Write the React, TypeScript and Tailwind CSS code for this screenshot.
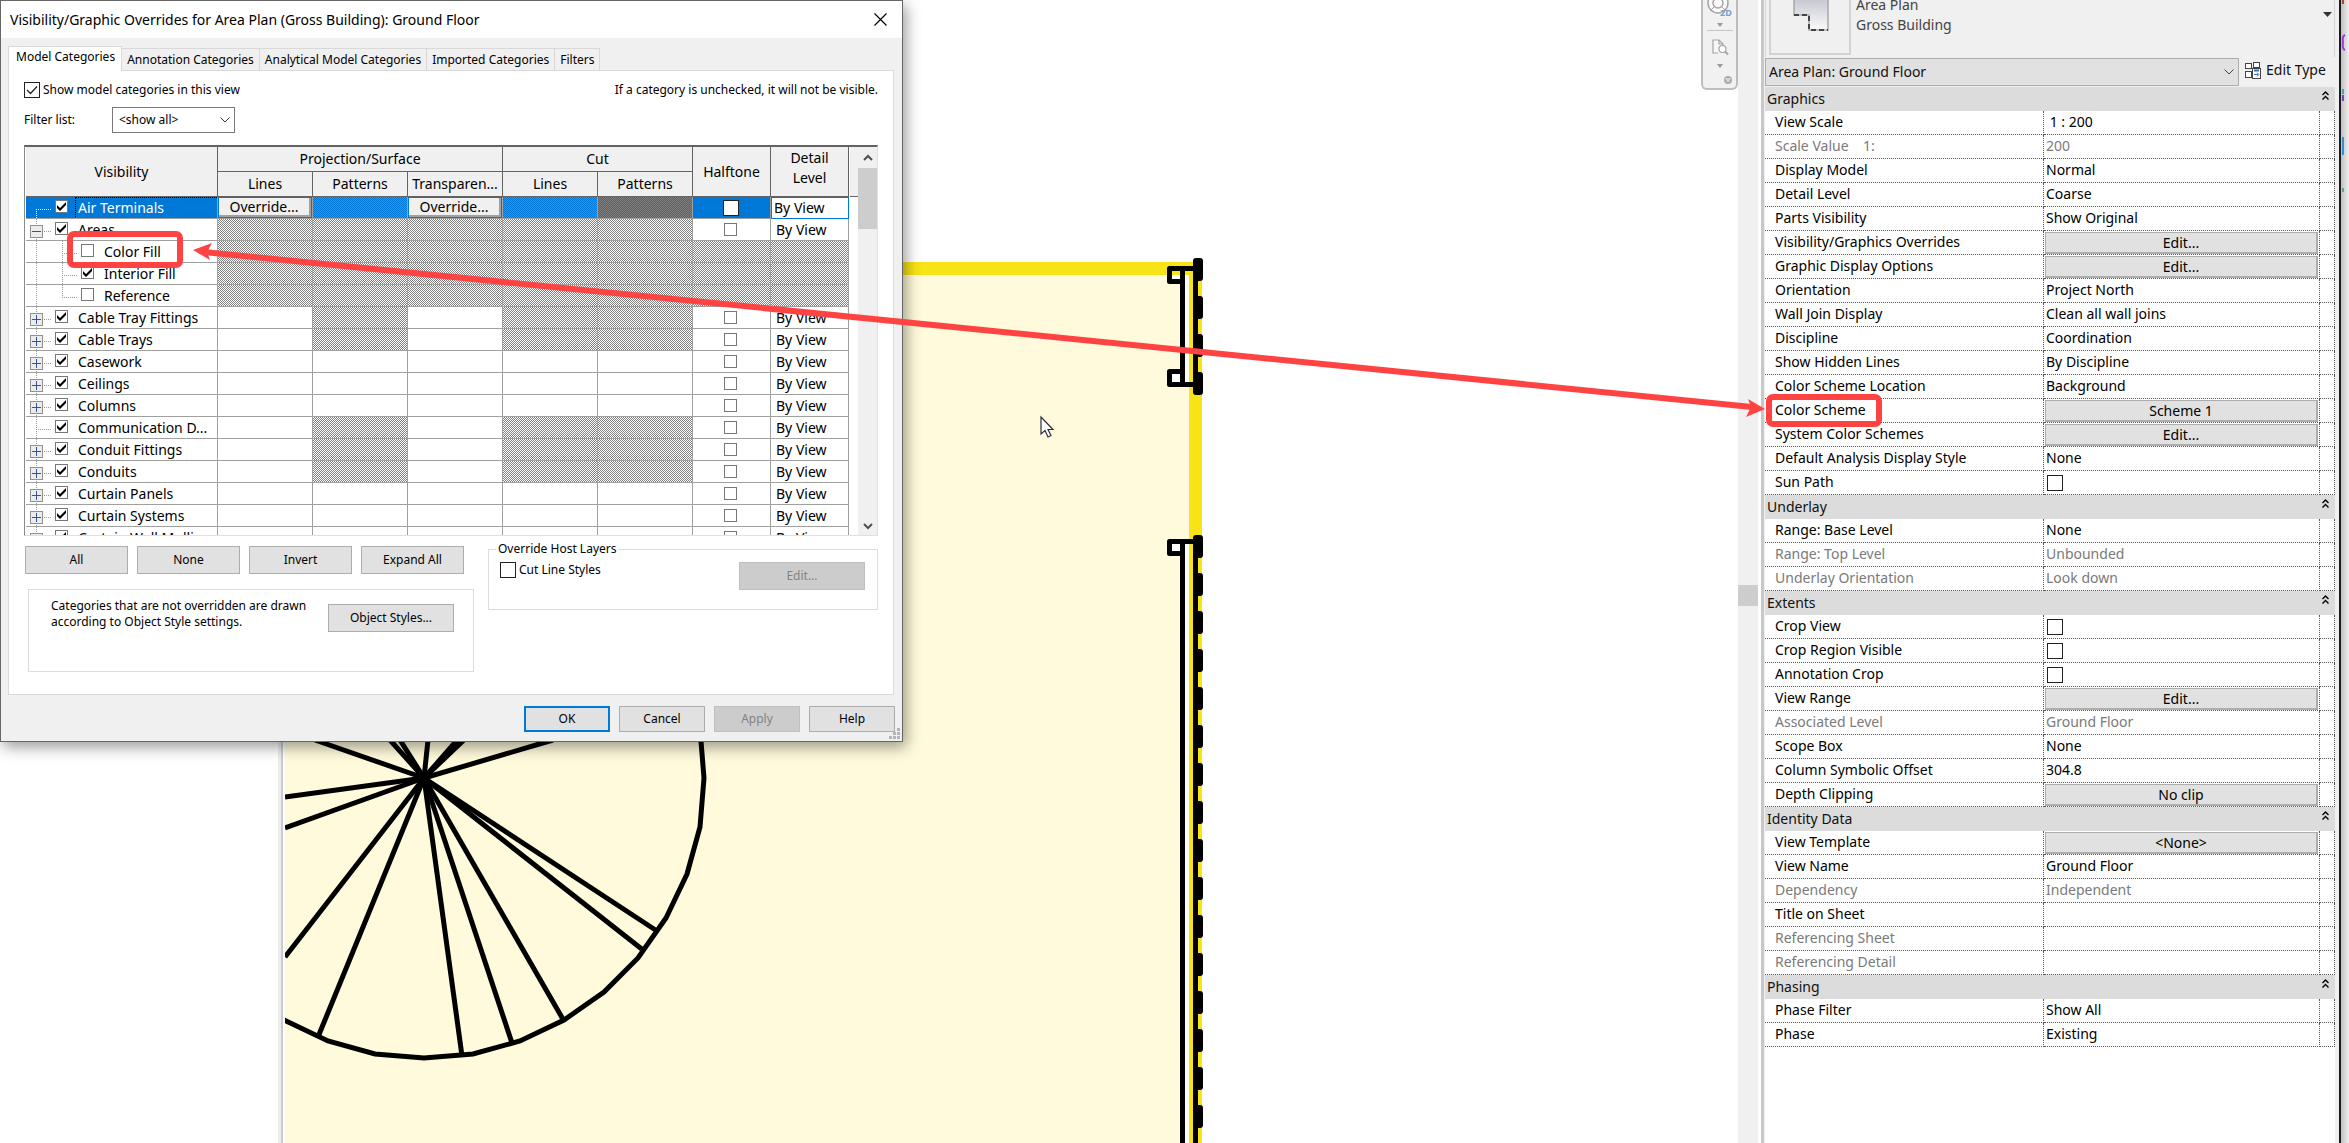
import { Fragment, type ReactNode } from "react";

const CENTER = { x: 424, y: 778 };
const RADIUS = 280;
const ARC = Array.from({ length: 36 }, (_, i) => {
  const a = (i * Math.PI) / 18;
  return `${Math.round(CENTER.x + RADIUS * Math.cos(a))},${Math.round(CENTER.y + RADIUS * Math.sin(a))}`;
}).join(" ");
const SPOKES: [number, number][] = [
  [285, 797], [285, 828], [285, 957], [318, 1037], [462, 1056], [512, 1043], [564, 1021],
  [643, 950], [657, 931], [315, 740], [390, 740], [400, 740], [428, 740], [459, 738], [466, 738], [553, 740],
];
const BOLTS = [258, 296, 334, 372, 535, 573, 611, 649, 687, 725, 763, 801, 839, 877, 915, 953, 991, 1029, 1067, 1105, 1143, 1181];

function PlanDrawing() {
  return (
    <svg className="absolute inset-0 h-full w-full" aria-hidden="true" shapeRendering="crispEdges">
      <rect x="285" y="262" width="917" height="3000" fill="#fffadb" />
      <rect x="285" y="262" width="917" height="13" fill="#f8e316" />
      <rect x="1189" y="262" width="13" height="3000" fill="#f8e316" />
      <rect x="278" y="0" width="3" height="3000" fill="#ededed" />
      <rect x="281" y="0" width="2" height="3000" fill="#cbcbcb" />
      <rect x="283" y="0" width="2" height="3000" fill="#ffffff" />

      <rect x="1185" y="275" width="4" height="108" fill="#fff" />
      <rect x="1172" y="275" width="8" height="5" fill="#fff" />
      <rect x="1172" y="374" width="8" height="9" fill="#fff" />
      <rect x="1185" y="544" width="4" height="3000" fill="#fff" />
      <rect x="1172" y="544" width="8" height="8" fill="#fff" />
      <g fill="none" stroke="#000" strokeWidth="5" shapeRendering="auto" strokeLinejoin="round">
        <path d="M1195.500 268.500H1169.500V281.500H1182.500M1182.500 268.500V384.500M1195.500 384.500H1169.500V371.500H1182.500" />
        <path d="M1195.500 541.500H1169.500V553.500H1182.500M1182.500 541.500V3000" />
        <path d="M1195.500 262V390M1195.500 540V3000" />
      </g>
      <g fill="#000" shapeRendering="auto">
        {BOLTS.map((y) => (
          <rect key={y} x="1193" y={y} width="10" height="23" rx="3" />
        ))}
      </g>

      <g stroke="#000" strokeWidth="5" fill="none" shapeRendering="auto">
        <svg x="285" y="262" width="900" height="3000" viewBox="285 262 900 3000">
          <polygon points={ARC} />
          {SPOKES.map(([x, y]) => (
            <line key={`${x}-${y}`} x1={CENTER.x} y1={CENTER.y} x2={x} y2={y} />
          ))}
        </svg>
      </g>

      <path
        d="M1041 417V434L1045 430.500L1048 437L1051 435.500L1048 429.500H1053Z"
        fill="#fff"
        stroke="#2b2f45"
        strokeWidth="1.200"
        shapeRendering="auto"
      />
    </svg>
  );
}

function NavigationBar() {
  return (
    <nav className="absolute top-0 right-0 flex h-[90px] w-[37px] flex-col items-center rounded-b-md border-2 border-t-0 border-[#bdbdbd] bg-[#f1f1f1]">
      <button aria-label="Steering wheel 2D" className="h-5">
        <svg width="28" height="20" viewBox="0 0 28 20" fill="none" stroke="#a5a5a5">
          <circle cx="12" cy="3" r="10" strokeWidth="1.500" fill="#fafafa" />
          <circle cx="12" cy="3" r="5" strokeWidth="1.500" />
          <path d="M4 11L8 7M20 11L16 7" />
          <text x="14" y="16" fontSize="9" fontWeight="700" fontFamily="Noto Sans, sans-serif" fill="#7b9fca" stroke="none">2D</text>
        </svg>
      </button>
      <svg width="6" height="4" viewBox="0 0 6 4" className="mt-[3px]"><path d="M0 0H6L3 4Z" fill="#999" /></svg>
      <hr className="mt-[3px] w-[26px] border-[#c4c4c4]" />
      <button aria-label="Zoom in region" className="mt-2">
        <svg width="18" height="17" viewBox="0 0 18 17" fill="none" stroke="#a3a3a3" strokeWidth="1.200">
          <path d="M7 14H2V1H8L12 5V6" fill="#f7f7f7" />
          <path d="M8 1V5H12" />
          <circle cx="11.500" cy="10" r="3.500" fill="#fff" />
          <path d="M14 12.500L17 15.500" strokeWidth="2" />
        </svg>
      </button>
      <svg width="6" height="4" viewBox="0 0 6 4" className="mt-2"><path d="M0 0H6L3 4Z" fill="#999" /></svg>
      <button aria-label="Customize" className="mt-2 mr-1 self-end">
        <svg width="8" height="8" viewBox="0 0 8 8">
          <circle cx="4" cy="4" r="4" fill="#a9a9a9" />
          <path d="M1.500 3H6.500M2.500 5H5.500" stroke="#fff" />
        </svg>
      </button>
    </nav>
  );
}

function Check({ label, checked = false, box = "size-4 border-[#222]", thin = false }: { label: string; checked?: boolean; box?: string; thin?: boolean }) {
  return (
    <span className="inline-grid shrink-0 place-items-center align-top">
      <input
        type="checkbox"
        aria-label={label}
        defaultChecked={checked}
        className={`peer col-start-1 row-start-1 appearance-none border bg-white ${box}`}
      />
      {thin ? (
        <svg width="12" height="12" viewBox="0 0 12 12" className="pointer-events-none invisible col-start-1 row-start-1 peer-checked:visible">
          <path d="M1 6L4.500 9.500L11 2.500" fill="none" stroke="#222" strokeWidth="1.300" />
        </svg>
      ) : (
        <svg width="11" height="11" viewBox="0 0 11 11" className="pointer-events-none invisible col-start-1 row-start-1 peer-checked:visible">
          <path d="M1 4L4 7L10 1V4L4 10L1 7Z" fill="#000" />
        </svg>
      )}
    </span>
  );
}

type Category = {
  name: string;
  checked?: boolean;
  kind: "leaf" | "open" | "closed" | "child" | "last";
  grey: "all" | "none" | "cols" | "surface";
  selected?: boolean;
};

const CATEGORIES: Category[] = [
  { name: "Air Terminals", checked: true, kind: "leaf", grey: "cols", selected: true },
  { name: "Areas", checked: true, kind: "open", grey: "surface" },
  { name: "Color Fill", kind: "child", grey: "all" },
  { name: "Interior Fill", checked: true, kind: "child", grey: "all" },
  { name: "Reference", kind: "last", grey: "all" },
  { name: "Cable Tray Fittings", checked: true, kind: "closed", grey: "cols" },
  { name: "Cable Trays", checked: true, kind: "closed", grey: "cols" },
  { name: "Casework", checked: true, kind: "closed", grey: "none" },
  { name: "Ceilings", checked: true, kind: "closed", grey: "none" },
  { name: "Columns", checked: true, kind: "closed", grey: "none" },
  { name: "Communication D...", checked: true, kind: "leaf", grey: "cols" },
  { name: "Conduit Fittings", checked: true, kind: "closed", grey: "cols" },
  { name: "Conduits", checked: true, kind: "closed", grey: "cols" },
  { name: "Curtain Panels", checked: true, kind: "closed", grey: "none" },
  { name: "Curtain Systems", checked: true, kind: "closed", grey: "none" },
  { name: "Curtain Wall Mulli...", checked: true, kind: "closed", grey: "none" },
];

function TreeLines({ cat }: { cat: Category }) {
  const child = cat.kind === "child" || cat.kind === "last";
  const expandable = cat.kind === "open" || cat.kind === "closed";
  const stroke = cat.selected ? "#fff" : "#999";
  return (
    <svg width={child ? 54 : 28} height="22" viewBox={child ? "0 0 54 22" : "0 0 28 22"} className="shrink-0" shapeRendering="crispEdges">
      <g stroke={stroke} strokeDasharray="1 1" fill="none">
        <path d={cat.selected ? "M10.500 12V22" : "M10.500 0V22"} />
        {child ? <path d={cat.kind === "last" ? "M36.500 0V12M36 12.500H51" : "M36.500 0V22M36 12.500H51"} /> : <path d="M10 12.500H26" />}
      </g>
      {expandable && (
        <g>
          <rect x="4.500" y="6.500" width="12" height="12" fill="#ececec" stroke="#919191" />
          <path d={cat.kind === "open" ? "M6 12.500H15" : "M6 12.500H15M10.500 8V17"} stroke="#31559b" />
        </g>
      )}
    </svg>
  );
}

const GREY = "bg-[repeating-conic-gradient(#808080_0_25%,#ffffff_0_50%)] bg-[length:2px_2px]";
const GREY_BLUE = "bg-[repeating-conic-gradient(#808080_0_25%,#0078d7_0_50%)] bg-[length:2px_2px]";
const CELL = "h-[22px] overflow-hidden border-r border-b border-[#a0a0a0] p-0";
const HEAD = "border-r border-b border-[#636363] bg-[#f0f0f0] p-0 font-normal";

function CategoryRow({ cat }: { cat: Category }) {
  const sel = cat.selected;
  const base = sel ? "bg-[#0078d7]" : "bg-white";
  const shaded = sel ? GREY_BLUE : GREY;
  const wide = cat.grey === "all";
  const child = cat.kind === "child" || cat.kind === "last";
  const isGrey = (i: number) => wide || cat.grey === "surface" || (cat.grey === "cols" && (i === 1 || i > 2));
  return (
    <tr>
      <th scope="row" className={`${CELL} ${base} text-left font-normal ${sel ? "text-white" : "text-black"}`}>
        <div className="flex h-[21px] items-start">
          <TreeLines cat={cat} />
          <span className="mt-[3px] ml-px">
            <Check label={cat.name} checked={cat.checked} box="size-[13px] border-[#777]" />
          </span>
          <span className={`h-[22px] ${child ? "pl-[10px] leading-[22px]" : sel ? "ml-[7px] grow border-t border-l border-dotted border-black pl-[2px] leading-5" : "pl-[10px] leading-[22px]"}`}>
            {cat.name}
          </span>
        </div>
      </th>
      {[0, 1, 2, 3, 4].map((i) => (
        <td key={i} className={`${CELL} ${isGrey(i) ? shaded : base}`}>
          {sel && !isGrey(i) && (
            <button className="mx-auto block h-[19px] w-[92px] border-r-2 border-b-2 border-[#a0a0a0] bg-[#f0f0f0] leading-[17px]">Override...</button>
          )}
        </td>
      ))}
      <td className={`${CELL} ${wide ? GREY : base}`}>
        {!wide && (
          <span className="flex justify-center pr-[2px]">
            <Check label={`${cat.name} halftone`} box={sel ? "size-4 border-[#222]" : "size-[13px] border-[#777]"} />
          </span>
        )}
      </td>
      <td className={`${CELL} ${wide ? GREY : "bg-white"} ${sel ? "outline-1 -outline-offset-1 outline-[#0078d7]" : ""}`}>
        {!wide && <span className={`block leading-5 ${sel ? "pl-[3px]" : "pl-[5px]"}`}>By View</span>}
      </td>
    </tr>
  );
}

function CategoryTable() {
  return (
    <div className="mt-3 flex h-[391px] overflow-hidden border border-t-2 border-[#e0e0e0] border-t-[#636363] border-l-[#8a8a8a] text-sm">
      <div className="grow pl-px">
        <table className="w-[823px] table-fixed border-separate border-spacing-0">
          <colgroup>
            <col className="w-[192px]" />
            <col className="w-[95px]" />
            <col className="w-[95px]" />
            <col className="w-[95px]" />
            <col className="w-[95px]" />
            <col className="w-[95px]" />
            <col className="w-[78px]" />
            <col className="w-[78px]" />
          </colgroup>
          <thead>
            <tr className="h-[25px]">
              <th rowSpan={2} className={HEAD}>Visibility</th>
              <th colSpan={3} className={HEAD}>Projection/Surface</th>
              <th colSpan={2} className={HEAD}>Cut</th>
              <th rowSpan={2} className={HEAD}>Halftone</th>
              <th rowSpan={2} className={`${HEAD} pb-2 leading-5`}>Detail<br />Level</th>
            </tr>
            <tr className="h-[25px]">
              {["Lines", "Patterns", "Transparen...", "Lines", "Patterns"].map((h, i) => (
                <th key={i} className={HEAD}>{h}</th>
              ))}
            </tr>
          </thead>
          <tbody>
            {CATEGORIES.map((c) => (
              <CategoryRow key={c.name} cat={c} />
            ))}
          </tbody>
        </table>
      </div>
      <div className="w-2 shrink-0">
        <div className="h-[50px] border-b border-[#636363] bg-[#f0f0f0]" />
      </div>
      <div className="flex w-[19px] shrink-0 flex-col items-center bg-[#f0f0f0]">
        <button aria-label="Scroll up" className="flex h-[21px] w-full items-center justify-center">
          <svg width="10" height="7" viewBox="0 0 10 7"><path d="M1 6L5 2L9 6" fill="none" stroke="#505050" strokeWidth="2" /></svg>
        </button>
        <div className="h-[61px] w-full bg-[#cdcdcd]" />
        <button aria-label="Scroll down" className="mt-auto flex h-[18px] w-full items-center justify-center">
          <svg width="10" height="7" viewBox="0 0 10 7"><path d="M1 1L5 5L9 1" fill="none" stroke="#505050" strokeWidth="2" /></svg>
        </button>
      </div>
    </div>
  );
}

const BTN = "border border-[#adadad] bg-[#e1e1e1]";
const BTN_OFF = "border border-[#bfbfbf] bg-[#cccccc] text-[#838383]";
const TAB = "h-[22px] border border-b-0 border-l-0 border-[#d9d9d9] px-[5px]";

function OverridesDialog() {
  return (
    <section
      role="dialog"
      aria-label="Visibility/Graphic Overrides"
      className="absolute top-0 left-0 w-[903px] border border-[#666] bg-[#f0f0f0] text-xs leading-4 text-black shadow-[3px_5px_14px_rgba(0,0,0,0.4)]"
    >
      <header className="flex h-[37px] items-center justify-between bg-white pr-[15px] pl-[9px]">
        <h1 className="text-sm">Visibility/Graphic Overrides for Area Plan (Gross Building): Ground Floor</h1>
        <button aria-label="Close">
          <svg width="13" height="13" viewBox="0 0 13 13"><path d="M0.500 0.500L12.500 12.500M12.500 0.500L0.500 12.500" stroke="#000" strokeWidth="1.200" /></svg>
        </button>
      </header>
      <div role="tablist" className="flex h-[32px] items-end pl-[7px]">
        <button role="tab" aria-selected="true" className="relative top-px h-[25px] border border-b-0 border-[#d9d9d9] bg-white pr-[6px] pb-1 pl-[7px]">Model Categories</button>
        <button role="tab" className={TAB}>Annotation Categories</button>
        <button role="tab" className={TAB}>Analytical Model Categories</button>
        <button role="tab" className={TAB}>Imported Categories</button>
        <button role="tab" className={TAB}>Filters</button>
      </div>
      <div role="tabpanel" className="mr-2 ml-[7px] border border-[#d9d9d9] bg-white px-[15px] pt-[11px] pb-[22px]">
        <div className="flex items-center justify-between">
          <label className="flex items-center gap-[3px]">
            <Check label="Show model categories in this view" checked thin />
            Show model categories in this view
          </label>
          <p>If a category is unchecked, it will not be visible.</p>
        </div>
        <div className="mt-[9px] flex items-center">
          <label htmlFor="filter" className="w-[88px]">Filter list:</label>
          <span className="grid w-[123px] items-center">
            <select id="filter" className="col-start-1 row-start-1 h-[26px] appearance-none border border-[#7a7a7a] bg-white pl-[6px]">
              <option>&lt;show all&gt;</option>
            </select>
            <svg width="10" height="6" viewBox="0 0 10 6" className="pointer-events-none col-start-1 row-start-1 mr-[5px] justify-self-end"><path d="M0.500 0.500L5 5L9.500 0.500" fill="none" stroke="#333" /></svg>
          </span>
        </div>
        <CategoryTable />
        <div className="mt-[5px] flex gap-[14px]">
          <div className="w-[450px] pt-[5px]">
            <div className="flex gap-[9px] pl-px">
              {["All", "None", "Invert", "Expand All"].map((b) => (
                <button key={b} className={`h-7 w-[103px] ${BTN}`}>{b}</button>
              ))}
            </div>
            <div className="mt-[15px] ml-1 flex h-[83px] justify-between border border-[#dcdcdc] pt-[8px] pr-[19px] pl-[22px]">
              <p>Categories that are not overridden are drawn<br />according to Object Style settings.</p>
              <button className={`mt-[6px] h-7 w-[126px] ${BTN}`}>Object Styles...</button>
            </div>
          </div>
          <fieldset className="h-[69px] grow border border-[#dcdcdc] pr-3 pl-[11px]">
            <legend className="-ml-1 px-[2px]">Override Host Layers</legend>
            <div className="flex items-start justify-between pt-[5px]">
              <label className="flex items-center gap-[3px]">
                <Check label="Cut Line Styles" />
                Cut Line Styles
              </label>
              <button disabled className={`h-7 w-[126px] ${BTN_OFF}`}>Edit...</button>
            </div>
          </fieldset>
        </div>
      </div>
      <footer className="flex h-[46px] justify-end gap-[9px] pt-[11px] pr-[7px]">
        <button className="h-[26px] w-[86px] border-2 border-[#0078d7] bg-[#e1e1e1]">OK</button>
        <button className={`h-[26px] w-[86px] ${BTN}`}>Cancel</button>
        <button disabled className={`h-[26px] w-[86px] ${BTN_OFF}`}>Apply</button>
        <button className={`h-[26px] w-[86px] ${BTN}`}>Help</button>
      </footer>
      <svg width="11" height="11" viewBox="0 0 11 11" className="absolute right-[2px] bottom-[2px]" fill="#b5b5b5">
        <path d="M8 0h3v3h-3zM4 4h3v3h-3zM8 4h3v3h-3zM0 8h3v3h-3zM4 8h3v3h-3zM8 8h3v3h-3z" />
      </svg>
    </section>
  );
}

type Prop = { label: string; value?: string; kind?: "button" | "check"; off?: boolean };
const GROUPS: { title: string; rows: Prop[] }[] = [
  {
    title: "Graphics",
    rows: [
      { label: "View Scale", value: "\u00a01 : 200" },
      { label: "Scale Value\u00a0\u00a0\u00a0\u00a01:", value: "200", off: true },
      { label: "Display Model", value: "Normal" },
      { label: "Detail Level", value: "Coarse" },
      { label: "Parts Visibility", value: "Show Original" },
      { label: "Visibility/Graphics Overrides", value: "Edit...", kind: "button" },
      { label: "Graphic Display Options", value: "Edit...", kind: "button" },
      { label: "Orientation", value: "Project North" },
      { label: "Wall Join Display", value: "Clean all wall joins" },
      { label: "Discipline", value: "Coordination" },
      { label: "Show Hidden Lines", value: "By Discipline" },
      { label: "Color Scheme Location", value: "Background" },
      { label: "Color Scheme", value: "Scheme 1", kind: "button" },
      { label: "System Color Schemes", value: "Edit...", kind: "button" },
      { label: "Default Analysis Display Style", value: "None" },
      { label: "Sun Path", kind: "check" },
    ],
  },
  {
    title: "Underlay",
    rows: [
      { label: "Range: Base Level", value: "None" },
      { label: "Range: Top Level", value: "Unbounded", off: true },
      { label: "Underlay Orientation", value: "Look down", off: true },
    ],
  },
  {
    title: "Extents",
    rows: [
      { label: "Crop View", kind: "check" },
      { label: "Crop Region Visible", kind: "check" },
      { label: "Annotation Crop", kind: "check" },
      { label: "View Range", value: "Edit...", kind: "button" },
      { label: "Associated Level", value: "Ground Floor", off: true },
      { label: "Scope Box", value: "None" },
      { label: "Column Symbolic Offset", value: "304.8" },
      { label: "Depth Clipping", value: "No clip", kind: "button" },
    ],
  },
  {
    title: "Identity Data",
    rows: [
      { label: "View Template", value: "<None>", kind: "button" },
      { label: "View Name", value: "Ground Floor" },
      { label: "Dependency", value: "Independent", off: true },
      { label: "Title on Sheet" },
      { label: "Referencing Sheet", off: true },
      { label: "Referencing Detail", off: true },
    ],
  },
  {
    title: "Phasing",
    rows: [
      { label: "Phase Filter", value: "Show All" },
      { label: "Phase", value: "Existing" },
    ],
  },
];

const PCELL = "h-6 border-r border-b border-dotted border-[#555] p-0 text-left font-normal";

function PropertyValue({ p }: { p: Prop }): ReactNode {
  if (p.kind === "button")
    return <button aria-label={`${p.label}: ${p.value}`} className="ml-px block h-[22px] w-[273px] border border-r-2 border-b-2 border-[#adadad] bg-[#e1e1e1] leading-[19px]">{p.value}</button>;
  if (p.kind === "check")
    return <span className="ml-[3px] flex"><Check label={p.label} /></span>;
  return <span className="block pb-[2px] pl-[2px] leading-5">{p.value}</span>;
}

function PropertiesPanel() {
  return (
    <aside aria-label="Properties" className="flex w-[578px] shrink-0 flex-col border-l-[3px] border-[#c8c8c8] bg-[#f0f0f0] pr-1 pl-px text-sm text-[#111]">
      <div className="flex h-[57px] border-x border-[#d4d4d4] pl-[3px]">
        <div className="h-[55px] w-[82px] border-2 border-t-0 border-[#d2d2d2] pl-[22px]">
          <svg width="36" height="32" viewBox="0 0 36 32">
            <defs>
              <linearGradient id="plan" x1="0" y1="0" x2="0" y2="1">
                <stop offset="0" stopColor="#c7cad3" />
                <stop offset="1" stopColor="#fafafa" />
              </linearGradient>
            </defs>
            <path d="M1 0V15H16V30H35V0Z" fill="url(#plan)" />
            <path d="M1 0V15H16V30H35V0" fill="none" stroke="#a9a9a9" strokeWidth="1.500" />
            <path d="M1 15H16V30H35" fill="none" stroke="#444" strokeWidth="2" strokeDasharray="5 3" />
          </svg>
        </div>
        <div className="-mt-[5px] ml-[5px] grow leading-5 text-[#444]">
          <p>Area Plan</p>
          <p>Gross Building</p>
        </div>
        <button aria-label="Type selector" className="mr-[2px] h-7">
          <svg width="9" height="5" viewBox="0 0 9 5"><path d="M0 0H9L4.500 5Z" fill="#333" /></svg>
        </button>
      </div>
      <div className="flex h-[30px] items-center">
        <span className="grid w-[474px] items-center">
          <select aria-label="View selector" className="col-start-1 row-start-1 h-7 appearance-none border border-[#adadad] bg-[#e1e1e1] pl-[3px]">
            <option>Area Plan: Ground Floor</option>
          </select>
          <svg width="10" height="6" viewBox="0 0 10 6" className="pointer-events-none col-start-1 row-start-1 mr-[5px] justify-self-end"><path d="M0.500 0.500L5 5L9.500 0.500" fill="none" stroke="#444" /></svg>
        </span>
        <button className="ml-[6px] flex items-center gap-[5px] pb-1">
          <svg width="16" height="17" viewBox="0 0 16 17" fill="#fff" stroke="#444">
            <rect x="0.500" y="1.500" width="6" height="5" />
            <rect x="8.500" y="0.500" width="6" height="5" />
            <rect x="0.500" y="9.500" width="6" height="6" />
            <rect x="7.500" y="6.500" width="8" height="10" />
            <path d="M9 8.500H14" stroke="#2f6fb5" strokeWidth="2" />
            <path d="M9 12.500H13M12 10.500L14 12.500L12 14.500" stroke="#2f6fb5" fill="none" />
          </svg>
          Edit Type
        </button>
      </div>
      <div className="grow bg-white">
        <table className="w-full table-fixed border-separate border-spacing-0">
          <colgroup>
            <col className="w-[279px]" />
            <col />
            <col className="w-[15px]" />
          </colgroup>
          <tbody>
            {GROUPS.map((g) => (
              <Fragment key={g.title}>
                <tr className="bg-[#dcdcdc]">
                  <th colSpan={3} className="h-6 p-0 text-left font-normal">
                    <button className="flex h-6 w-full justify-between pr-[6px] pl-[2px] leading-6">
                      {g.title}
                      <svg width="7" height="9" viewBox="0 0 7 9" className="mt-1" fill="none" stroke="#000" strokeWidth="1.400">
                        <path d="M0.500 4L3.500 1L6.500 4M0.500 8.500L3.500 5.500L6.500 8.500" />
                      </svg>
                    </button>
                  </th>
                </tr>
                {g.rows.map((p) => (
                  <tr key={p.label} className={p.off ? "text-[#7a7a7a]" : "text-black"}>
                    <th scope="row" className={`${PCELL} pb-[2px] pl-[10px] leading-5`}>{p.label}</th>
                    <td className={PCELL}><PropertyValue p={p} /></td>
                    <td className={PCELL} />
                  </tr>
                ))}
              </Fragment>
            ))}
          </tbody>
        </table>
      </div>
    </aside>
  );
}

function Callouts() {
  return (
    <svg className="pointer-events-none absolute inset-0 h-full w-full" aria-hidden="true">
      <g fill="none" stroke="#ff4343" strokeWidth="6">
        <rect x="70" y="234" width="110" height="31" rx="4" />
        <rect x="1769" y="397" width="110" height="27" rx="4" />
        <line x1="204" y1="252" x2="1752" y2="407" />
      </g>
      <g fill="#ff4343">
        <path d="M193 250L212 243L207 252L210 260Z" />
        <path d="M1765 409L1748 399L1751 407L1746 417Z" />
      </g>
    </svg>
  );
}

export default function App() {
  return (
    <div className="relative flex h-screen overflow-hidden bg-white font-['Noto_Sans',sans-serif]">
      <main className="relative grow">
        <PlanDrawing />
        <NavigationBar />
        <OverridesDialog />
      </main>
      <div className="mr-[3px] flex w-5 shrink-0 flex-col bg-[#f0f0f0] pt-[585px]">
        <div className="h-[21px] bg-[#cdcdcd]" />
      </div>
      <PropertiesPanel />
      <div className="w-[10px] shrink-0 border-l-2 border-[#1c1c1c] bg-linear-to-r from-[#c3bfc2] to-[#efefef]">
        <svg width="8" height="200" viewBox="0 0 8 200">
          <path d="M2 0V4" stroke="#b4452b" strokeWidth="2" />
          <path d="M4 35Q1 36 2 42Q1 49 4 50" stroke="#9b3fe0" strokeWidth="2" fill="none" />
          <path d="M2 89V94" stroke="#3aa6c8" strokeWidth="2" />
          <path d="M2 95V101" stroke="#6b4fb0" strokeWidth="2" />
          <path d="M2 137V155" stroke="#3a8fd0" strokeWidth="2" />
          <path d="M2 188V192" stroke="#57a9a0" strokeWidth="2" />
        </svg>
      </div>
      <Callouts />
    </div>
  );
}
